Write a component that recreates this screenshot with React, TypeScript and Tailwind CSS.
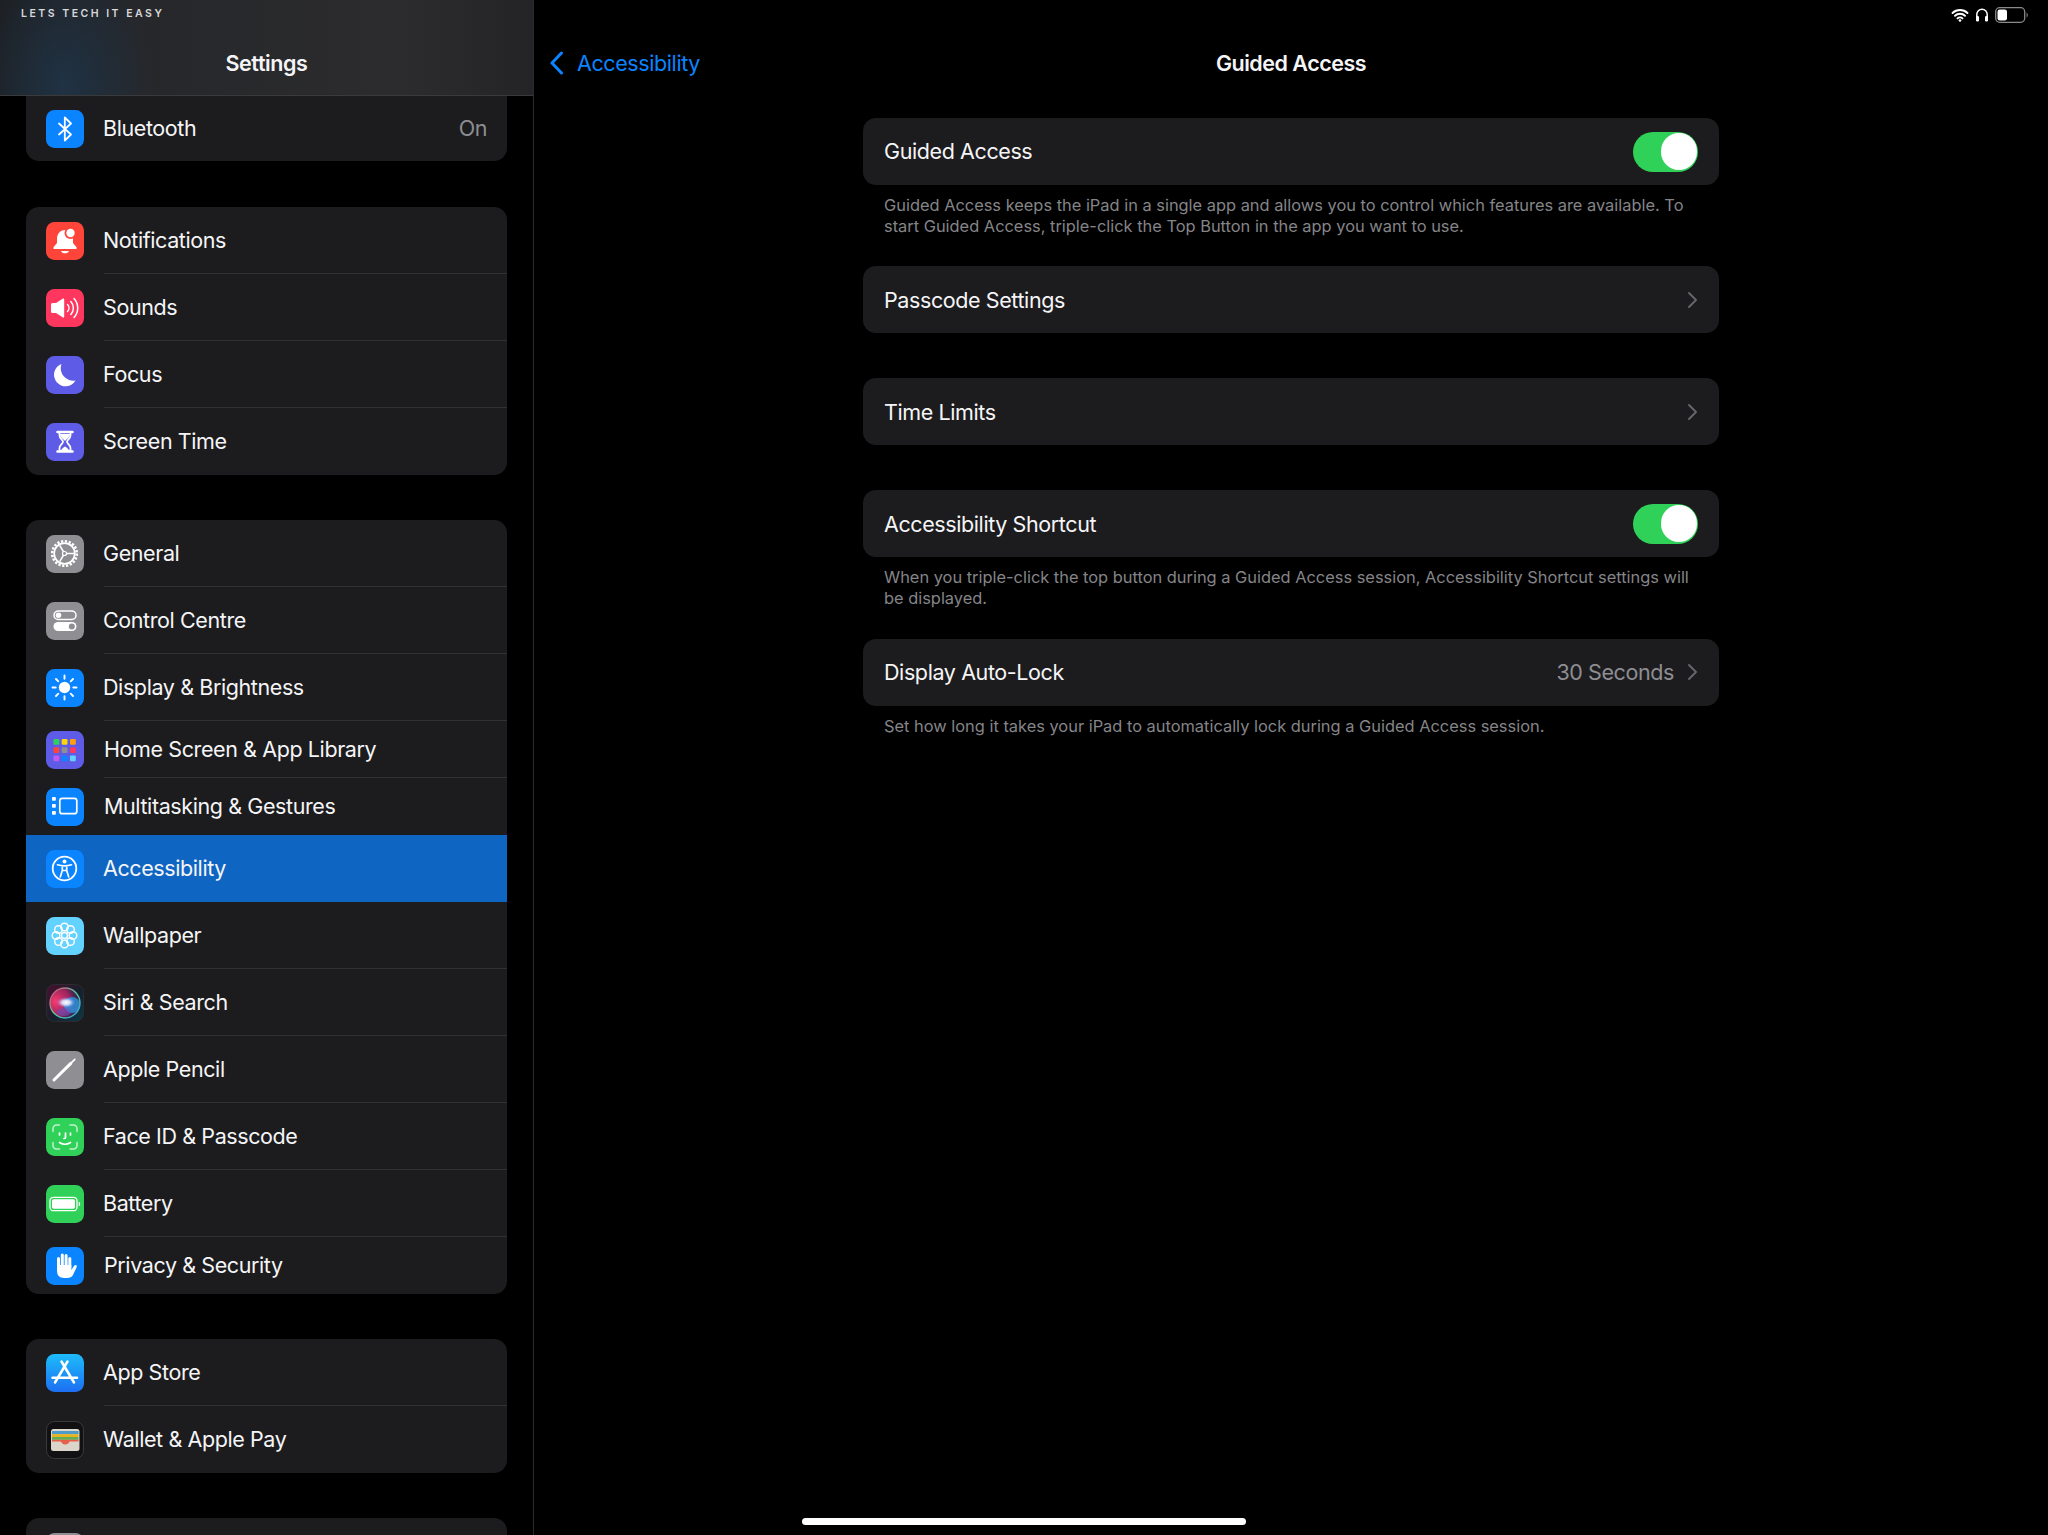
import type { ReactNode } from "react";

const Glyph = ({ children, className = "" }: { children: ReactNode; className?: string }) => (
  <div className={`w-[38px] h-[38px] rounded-[8.5px] shrink-0 overflow-hidden ${className}`}>
    <svg viewBox="0 0 38 38" width="38" height="38" fill="none">
      {children}
    </svg>
  </div>
);

const icons: Record<string, ReactNode> = {
  bluetooth: (
    <Glyph className="bg-[#0a84ff]">
      <path d="M13 13.500 L25 24.500 L18.800 30.500 V7.500 L25 13.500 L13 24.500" stroke="#fff" strokeWidth="1.800" strokeLinejoin="round" strokeLinecap="round" />
    </Glyph>
  ),
  notifications: (
    <Glyph className="bg-[#ff453a]">
      <path d="M19 8c-5 0-8 4-8 9v4l-3.500 4.200V27h23v-1.800L27 21v-4c0-5-3-9-8-9z" fill="#fff" />
      <path d="M15 29h8c-.5 1.600-2.200 2.300-4 2.300s-3.500-.7-4-2.300z" fill="#fff" />
      <circle cx="24.500" cy="11" r="6" fill="#ff453a" />
      <circle cx="24.500" cy="11" r="4.200" fill="#fff" />
    </Glyph>
  ),
  sounds: (
    <Glyph className="bg-[#ff375f]">
      <path d="M5 15.500q0-1.500 1.500-1.500H10l7-4.500q1.200-.5 1.200 1v17q0 1.500-1.200 1L10 24H6.500Q5 24 5 22.500z" fill="#fff" />
      <g stroke="#fff" strokeWidth="1.500" strokeLinecap="round">
        <path d="M21.500 15.500a5 5 0 0 1 0 7" />
        <path d="M24.800 12.500a9.500 9.500 0 0 1 0 13" />
        <path d="M28 9.500a14 14 0 0 1 0 19" />
      </g>
    </Glyph>
  ),
  focus: (
    <Glyph className="bg-[#5e5ce6]">
      <path d="M15.500 8A11.500 11.500 0 1 0 29.500 24.500 A12.500 12.500 0 0 1 15.500 8z" fill="#fff" />
    </Glyph>
  ),
  screentime: (
    <Glyph className="bg-[#5e5ce6]">
      <path d="M11.500 9h15M11.500 28.500h15" stroke="#fff" strokeWidth="2.600" strokeLinecap="round" />
      <path d="M13.500 10v2.500c0 3 3.500 4.500 3.500 6.300s-3.500 3.200-3.500 6.200v3h11v-3c0-3-3.500-4.400-3.500-6.200s3.500-3.300 3.500-6.300V10" stroke="#fff" strokeWidth="1.800" />
      <path d="M14 11h10c0 3.500-3.500 5-5 7-1.500-2-5-3.500-5-7z" fill="#fff" />
      <path d="M15 27.500c.5-2 2.500-3 4-4 1.500 1 3.500 2 4 4z" fill="#fff" />
    </Glyph>
  ),
  general: (
    <Glyph className="bg-[#8e8e93]">
      <circle cx="18.500" cy="18.500" r="12.300" stroke="#fff" strokeWidth="2.600" strokeDasharray="2.300 1.560" />
      <circle cx="18.500" cy="18.500" r="10.300" stroke="#fff" strokeWidth="1.700" />
      <path d="M18.500 18.500H28M18.500 18.500L13.700 10.300M18.500 18.500L13.700 26.700" stroke="#fff" strokeWidth="1.600" />
      <circle cx="18.500" cy="18.500" r="2" fill="#8e8e93" stroke="#fff" strokeWidth="1.200" />
    </Glyph>
  ),
  control: (
    <Glyph className="bg-[#8e8e93]">
      <rect x="8" y="9" width="22" height="8.500" rx="4.250" stroke="#fff" strokeWidth="1.500" />
      <circle cx="12.500" cy="13.250" r="2.800" fill="#fff" />
      <rect x="7.500" y="20" width="23" height="9" rx="4.500" fill="#fff" />
      <circle cx="25.800" cy="24.500" r="3" fill="#8e8e93" />
    </Glyph>
  ),
  display: (
    <Glyph className="bg-[#0a84ff]">
      <circle cx="18.500" cy="18.500" r="5.700" fill="#fff" />
      <path d="M18.500 6.500v3.200M18.500 27.300v3.200M6.500 18.500h3.200M27.300 18.500h3.200M10 10l2.300 2.300M24.700 24.700L27 27M27 10l-2.300 2.300M12.300 24.700L10 27" stroke="#fff" strokeWidth="1.900" strokeLinecap="round" />
    </Glyph>
  ),
  home: (
    <Glyph className="bg-[#5e5ce6]">
      <rect x="7.500" y="8" width="5.800" height="5.800" rx="1.200" fill="#30d158" />
      <rect x="15.700" y="8" width="5.800" height="5.800" rx="1.200" fill="#ffd60a" />
      <rect x="24" y="8" width="5.800" height="5.800" rx="1.200" fill="#ff9f0a" />
      <rect x="7.500" y="16.200" width="5.800" height="5.800" rx="1.200" fill="#ff453a" />
      <rect x="15.700" y="16.200" width="5.800" height="5.800" rx="1.200" fill="#8e8e93" />
      <rect x="24" y="16.200" width="5.800" height="5.800" rx="1.200" fill="#ff375f" />
      <rect x="7.500" y="24.400" width="5.800" height="5.800" rx="1.200" fill="#bf5af2" />
      <rect x="15.700" y="24.400" width="5.800" height="5.800" rx="1.200" fill="#0a84ff" />
      <rect x="24" y="24.400" width="5.800" height="5.800" rx="1.200" fill="#64d2ff" />
    </Glyph>
  ),
  multitasking: (
    <Glyph className="bg-[#0a84ff]">
      <rect x="6" y="9" width="3.800" height="3.800" rx=".8" fill="#fff" />
      <rect x="6" y="16" width="3.800" height="3.800" rx=".8" fill="#fff" />
      <rect x="6" y="23" width="3.800" height="3.800" rx=".8" fill="#fff" />
      <rect x="13.800" y="10.300" width="17" height="15.400" rx="2.500" stroke="#fff" strokeWidth="1.700" />
    </Glyph>
  ),
  accessibility: (
    <Glyph className="bg-[#0a84ff]">
      <circle cx="18.500" cy="18.500" r="11.800" stroke="#fff" strokeWidth="1.800" />
      <circle cx="18.500" cy="11.500" r="2" fill="#fff" />
      <path d="M11.500 14.800c2.300.7 4.600 1 7 1s4.700-.3 7-1M16.300 16v4.500l-2 6.500M20.700 16v4.500l2 6.500M16.500 20.500h4" stroke="#fff" strokeWidth="1.700" strokeLinecap="round" strokeLinejoin="round" />
    </Glyph>
  ),
  wallpaper: (
    <Glyph className="bg-[#64d2ff]">
      <g stroke="#fff" strokeWidth="1.400">
        <circle cx="18.500" cy="18.500" r="3" />
        <circle cx="18.500" cy="10" r="3.800" />
        <circle cx="18.500" cy="27" r="3.800" />
        <circle cx="10" cy="18.500" r="3.800" />
        <circle cx="27" cy="18.500" r="3.800" />
        <circle cx="12.500" cy="12.500" r="3.800" />
        <circle cx="24.500" cy="12.500" r="3.800" />
        <circle cx="12.500" cy="24.500" r="3.800" />
        <circle cx="24.500" cy="24.500" r="3.800" />
      </g>
    </Glyph>
  ),
  siri: (
    <Glyph className="bg-[linear-gradient(135deg,#4a0f30,#14202c_55%,#0c3a4a)] border border-[#2c2c30]">
      <defs>
        <radialGradient id="siriPink" cx="0.2" cy="0.45" r="0.7">
          <stop offset="0" stopColor="#ff3a70" />
          <stop offset="0.7" stopColor="#b02060" stopOpacity="0.8" />
          <stop offset="1" stopColor="#501848" stopOpacity="0.3" />
        </radialGradient>
        <radialGradient id="siriWhite" cx="0.5" cy="0.5" r="0.5">
          <stop offset="0" stopColor="#fff" />
          <stop offset="0.45" stopColor="#e4ecff" stopOpacity="0.85" />
          <stop offset="1" stopColor="#6090ff" stopOpacity="0" />
        </radialGradient>
        <linearGradient id="siriRing" x1="0" y1="0" x2="1" y2="1">
          <stop offset="0" stopColor="#e03a68" />
          <stop offset="0.5" stopColor="#60c8a0" />
          <stop offset="1" stopColor="#3a9ce0" />
        </linearGradient>
      </defs>
      <circle cx="18" cy="18" r="15" fill="#2b3350" />
      <circle cx="18" cy="18" r="15" fill="url(#siriPink)" />
      <ellipse cx="25" cy="20" rx="8" ry="8" fill="#2f8fd8" opacity="0.85" />
      <ellipse cx="17" cy="27" rx="7" ry="4" fill="#6a50c0" opacity="0.6" />
      <circle cx="18" cy="18" r="15" stroke="url(#siriRing)" strokeWidth="1.400" />
      <ellipse cx="19" cy="17.500" rx="9.500" ry="5.500" fill="url(#siriWhite)" />
    </Glyph>
  ),
  pencil: (
    <Glyph className="bg-[#8e8e93]">
      <path d="M8 29L24.800 12.400" stroke="#fff" strokeWidth="3" strokeLinecap="round" />
      <path d="M26 11.200l2.800-2.800" stroke="#fff" strokeWidth="1.700" strokeLinecap="round" />
    </Glyph>
  ),
  face: (
    <Glyph className="bg-[#30d158]">
      <path d="M7 13.500v-3a3.500 3.500 0 0 1 3.500-3.500h3M24 7h3.500a3.500 3.500 0 0 1 3.500 3.500v3M31 24.500v3a3.500 3.500 0 0 1-3.500 3.500H24M13.500 31h-3A3.500 3.500 0 0 1 7 27.500v-3" stroke="#fff" strokeOpacity="0.7" strokeWidth="1.500" strokeLinecap="round" />
      <path d="M13.500 15v2M24.500 15v2M19.500 15v4.500q0 1-1.500 1M13.500 24.500q5.500 3.500 11 0" stroke="#fff" strokeWidth="1.700" strokeLinecap="round" />
    </Glyph>
  ),
  battery: (
    <Glyph className="bg-[#30d158]">
      <rect x="4" y="12.300" width="27" height="13.400" rx="3.500" stroke="#fff" strokeWidth="1.300" />
      <rect x="6" y="14.300" width="23" height="9.400" rx="1.800" fill="#fff" />
      <path d="M32.700 16.500q1.500.7 1.500 2.500t-1.500 2.500z" fill="#fff" />
    </Glyph>
  ),
  privacy: (
    <Glyph className="bg-[#0a84ff]">
      <path d="M12.500 20V11.500M16.300 20V8M20.100 20V8.500M23.800 21V11.500" stroke="#fff" strokeWidth="3" strokeLinecap="round" />
      <path d="M11 18h14.300v5l3-4.500q1.300-1.200 2.300 0 .5.700 0 1.700L27 28q-1.500 3-6 3h-3q-7 0-7-7z" fill="#fff" />
    </Glyph>
  ),
  appstore: (
    <Glyph className="bg-[linear-gradient(180deg,#1dbcfb,#1d6ff2)]">
      <path d="M15.500 7.500L28 28.500M21.500 7.500L9 28.500M6.500 23.800H31" stroke="#fff" strokeWidth="2.500" strokeLinecap="round" />
    </Glyph>
  ),
  wallet: (
    <Glyph className="bg-[#111113] border border-[#39393c]">
      <g transform="translate(-1 -1)">
        <rect x="5" y="8" width="28.500" height="22" rx="2.500" fill="#dcd6ca" />
        <rect x="6" y="10" width="26.500" height="3.200" fill="#4b9bcb" />
        <rect x="6" y="13.200" width="26.500" height="2.800" fill="#e9b31f" />
        <rect x="6" y="16" width="26.500" height="2.800" fill="#62ae52" />
        <path d="M6 18.800h26.500V20.500H23.500q-1 3-4.200 3-3.200 0-4.300-3H6z" fill="#e6604c" />
      </g>
    </Glyph>
  ),
  passwords: <Glyph className="bg-[#8e8e93]">{null}</Glyph>,
};

type Row = { key: string; label: string; h: string; value?: string; active?: boolean };

const groups: { rows: Row[]; className: string }[] = [
  { className: "mt-[46px]", rows: [
    { key: "notifications", label: "Notifications", h: "h-[67px]" },
    { key: "sounds", label: "Sounds", h: "h-[67px]" },
    { key: "focus", label: "Focus", h: "h-[67px]" },
    { key: "screentime", label: "Screen Time", h: "h-[67px]" },
  ] },
  { className: "mt-[45px]", rows: [
    { key: "general", label: "General", h: "h-[67px]" },
    { key: "control", label: "Control Centre", h: "h-[67px]" },
    { key: "display", label: "Display & Brightness", h: "h-[67px]" },
    { key: "home", label: "Home Screen & App Library", h: "h-[57px]" },
    { key: "multitasking", label: "Multitasking & Gestures", h: "h-[57px]" },
    { key: "accessibility", label: "Accessibility", h: "h-[67px]", active: true },
    { key: "wallpaper", label: "Wallpaper", h: "h-[67px]" },
    { key: "siri", label: "Siri & Search", h: "h-[67px]" },
    { key: "pencil", label: "Apple Pencil", h: "h-[67px]" },
    { key: "face", label: "Face ID & Passcode", h: "h-[67px]" },
    { key: "battery", label: "Battery", h: "h-[67px]" },
    { key: "privacy", label: "Privacy & Security", h: "h-[57px]" },
  ] },
  { className: "mt-[45px]", rows: [
    { key: "appstore", label: "App Store", h: "h-[67px]" },
    { key: "wallet", label: "Wallet & Apple Pay", h: "h-[67px]" },
  ] },
  { className: "mt-[45px]", rows: [
    { key: "passwords", label: "", h: "h-[67px]" },
  ] },
];

const SettingsRow = ({ row, divider }: { row: Row; divider: boolean }) => (
  <div className={`flex items-center pl-[20px] gap-[20px] ${row.h} ${row.active ? "bg-[#0f65c2]" : ""}`}>
    {icons[row.key]}
    <div className={`flex-1 h-full flex items-center justify-between pr-[20px] ${divider ? "border-b border-[#313134]" : ""}`}>
      <span className={row.h === "h-[57px]" ? "" : "-ml-[1px]"}>{row.label}</span>
      {row.value && <span className="text-[#8e8e93]">{row.value}</span>}
    </div>
  </div>
);

const Chevron = () => (
  <svg width="9" height="16" viewBox="0 0 9 16" fill="none">
    <path d="M1 1l7 7-7 7" stroke="#68686c" strokeWidth="1.800" strokeLinecap="round" strokeLinejoin="round" />
  </svg>
);

const Toggle = () => (
  <div className="w-[65px] h-[40px] -mr-[1px] rounded-full bg-[#30d158] flex justify-end items-center pr-[1px]">
    <div className="w-[36px] h-[37px] rounded-full bg-white" />
  </div>
);

const Card = ({ children }: { children: ReactNode }) => (
  <div className="h-[67px] rounded-[13px] bg-[#1c1c1e] flex items-center justify-between pl-[21px] pr-[22px]">
    {children}
  </div>
);

const Note = ({ children, className }: { children: ReactNode; className: string }) => (
  <p className={`px-[21px] pt-[10px] text-[16.4px] leading-[20.7px] text-[#858589] ${className}`}>{children}</p>
);

export default function App() {
  return (
    <div className="relative w-[2048px] h-[1535px] overflow-hidden bg-black text-[#f5f5f7] text-[21.5px] tracking-[-0.4px] font-['Inter','Liberation_Sans',sans-serif] flex">
      {/* Sidebar */}
      <aside className="w-[534px] h-full shrink-0 border-r border-[#2a2a2c] overflow-hidden">
        <header className="h-[96px] pt-[48px] text-center text-[21.5px] leading-[30px] font-semibold border-b border-[#3a3a3c] bg-[radial-gradient(ellipse_90px_130px_at_65px_85px,#1f3244,transparent),linear-gradient(90deg,#1d1f22_0%,#26272a_25%,#2c2c2e_75%,#242426_100%)]">
          Settings
        </header>
        <div className="px-[26px]">
          <div className="bg-[#1c1c1e] rounded-b-[13px] overflow-hidden">
            <SettingsRow row={{ key: "bluetooth", label: "Bluetooth", h: "h-[65px]", value: "On" }} divider={false} />
          </div>
          {groups.map((g, gi) => (
            <div key={gi} className={`bg-[#1c1c1e] rounded-[13px] overflow-hidden ${g.className}`}>
              {g.rows.map((r, i) => {
                const next = g.rows[i + 1];
                return <SettingsRow key={r.key} row={r} divider={!!next && !r.active && !next.active} />;
              })}
            </div>
          ))}
        </div>
      </aside>

      {/* Detail pane */}
      <main className="flex-1 h-full">
        <div className="h-[96px] pt-[48px] grid grid-cols-[1fr_auto_1fr] items-start leading-[30px]">
          <div className="h-[30px] flex items-center gap-[13px] pl-[15px] text-[#0a84ff]">
            <svg width="15" height="24" viewBox="0 0 15 24" fill="none">
              <path d="M12.500 2L3 12l9.500 10" stroke="#0a84ff" strokeWidth="3" strokeLinecap="round" strokeLinejoin="round" />
            </svg>
            <span>Accessibility</span>
          </div>
          <div className="text-[21.5px] font-semibold tracking-[-0.5px]">Guided Access</div>
          <div />
        </div>

        <div className="w-[856px] mx-auto mt-[22px]">
          <Card>
            <span>Guided Access</span>
            <Toggle />
          </Card>
          <Note className="pb-[30px] tracking-normal">
            Guided Access keeps the iPad in a single app and allows you to control which features are available. To start Guided Access, triple-click the Top Button in the app you want to use.
          </Note>
          <Card>
            <span>Passcode Settings</span>
            <Chevron />
          </Card>
          <div className="h-[45px]" />
          <Card>
            <span>Time Limits</span>
            <Chevron />
          </Card>
          <div className="h-[45px]" />
          <Card>
            <span>Accessibility Shortcut</span>
            <Toggle />
          </Card>
          <Note className="pb-[30px] tracking-normal">
            When you triple-click the top button during a Guided Access session, Accessibility Shortcut settings will be displayed.
          </Note>
          <Card>
            <span>Display Auto-Lock</span>
            <div className="flex items-center gap-[14px]">
              <span className="text-[#8e8e93]">30 Seconds</span>
              <Chevron />
            </div>
          </Card>
          <Note className="tracking-normal">Set how long it takes your iPad to automatically lock during a Guided Access session.</Note>
        </div>
      </main>

      {/* Overlays: watermark, status bar, home indicator */}
      <div className="absolute left-[21px] top-[7px] text-[10.5px] leading-[14px] font-semibold tracking-[2.5px] text-[#d8d8da]">LETS TECH IT EASY</div>

      <div className="absolute right-[20px] top-[7px] flex items-center gap-[6px]">
        <svg width="18" height="14" viewBox="0 0 18 14" fill="none">
          <path d="M1.500 5a11 11 0 0 1 15 0M4 7.800a7.300 7.300 0 0 1 10 0M6.500 10.400a3.500 3.500 0 0 1 5 0" stroke="#fff" strokeWidth="1.900" strokeLinecap="round" />
          <circle cx="9" cy="12.500" r="1.300" fill="#fff" />
        </svg>
        <svg width="14" height="14" viewBox="0 0 14 14" fill="none">
          <path d="M1.800 9V6.500a5.200 5.200 0 0 1 10.400 0V9" stroke="#fff" strokeWidth="1.500" />
          <rect x="1" y="8" width="3" height="5.500" rx="1.200" fill="#fff" />
          <rect x="10" y="8" width="3" height="5.500" rx="1.200" fill="#fff" />
        </svg>
        <svg width="33" height="16" viewBox="0 0 33 16" fill="none">
          <rect x=".7" y=".7" width="29" height="14.600" rx="4" stroke="#8a8a8c" strokeWidth="1.300" />
          <rect x="2.500" y="2.500" width="9.500" height="11" rx="2.200" fill="#fff" />
          <path d="M31.500 5.500q1.500.8 1.500 2.500t-1.500 2.500z" fill="#6a6a6c" />
        </svg>
      </div>

      <div className="absolute left-[802px] top-[1518px] w-[444px] h-[7px] rounded-full bg-white" />
    </div>
  );
}
